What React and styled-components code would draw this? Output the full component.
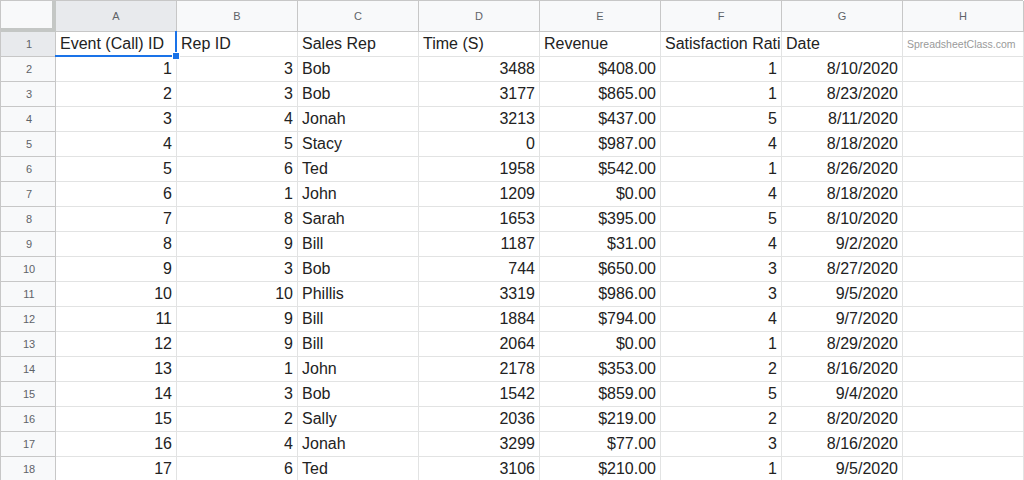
import React from "react";
import styled, { createGlobalStyle } from "styled-components";

const Global = createGlobalStyle`
  html, body { margin: 0; padding: 0; background: #fff; }
  body { font-family: "Liberation Sans", Arial, sans-serif; overflow: hidden; }
`;

const Sheet = styled.div`
  display: grid;
  grid-template-columns: 55px repeat(8, 121px);
  grid-auto-rows: 25px;
  grid-template-rows: 31px;
  width: 1023px;
  border-left: 1px solid #c7c7c7;
  border-top: 1px solid #c7c7c7;
  box-sizing: border-box;
`;

const Corner = styled.div`
  background: #f8f9fa;
  border-right: 4px solid #c4c7c5;
  border-bottom: 4px solid #c4c7c5;
  box-sizing: border-box;
`;

const ColHead = styled.div`
  background: ${(p) => (p.$active ? "#e8eaed" : "#f8f9fa")};
  border-right: 1px solid #c7c7c7;
  border-bottom: 1px solid #c7c7c7;
  box-sizing: border-box;
  display: flex;
  align-items: center;
  justify-content: center;
  font-size: 11px;
  color: #5f6368;
`;

const RowHead = styled.div`
  background: ${(p) => (p.$active ? "#e8eaed" : "#f8f9fa")};
  border-right: 1px solid #c7c7c7;
  border-bottom: 1px solid #c7c7c7;
  box-sizing: border-box;
  display: flex;
  align-items: center;
  justify-content: center;
  font-size: 11px;
  color: #5f6368;
  padding-left: 2px;
`;

const Cell = styled.div`
  position: relative;
  z-index: ${(p) => (p.$selected ? 2 : "auto")};
  border-right: 1px solid #e2e3e3;
  border-bottom: 1px solid #e2e3e3;
  box-sizing: border-box;
  display: flex;
  align-items: center;
  justify-content: ${(p) => (p.$num ? "flex-end" : "flex-start")};
  padding: 0 4px 0 4px;
  font-size: ${(p) => (p.$note ? "10.5px" : "16px")};
  color: ${(p) => (p.$note ? "#9a9a9a" : "#222")};
  white-space: nowrap;
  overflow: ${(p) => (p.$selected ? "visible" : "hidden")};
`;

const Selection = styled.div`
  position: absolute;
  left: -1px;
  top: -1px;
  right: -1px;
  bottom: -1px;
  border-right: 2px solid #1a73e8;
  border-bottom: 2px solid #1a73e8;
  pointer-events: none;
`;

const Handle = styled.div`
  position: absolute;
  right: -5px;
  bottom: -5px;
  width: 6px;
  height: 6px;
  background: #1a73e8;
  border: 1px solid #fff;
`;

const cols = ["A", "B", "C", "D", "E", "F", "G", "H"];

const header = ["Event (Call) ID", "Rep ID", "Sales Rep", "Time (S)", "Revenue", "Satisfaction Rating", "Date"];

const data = [
  [1, 3, "Bob", 3488, "$408.00", 1, "8/10/2020"],
  [2, 3, "Bob", 3177, "$865.00", 1, "8/23/2020"],
  [3, 4, "Jonah", 3213, "$437.00", 5, "8/11/2020"],
  [4, 5, "Stacy", 0, "$987.00", 4, "8/18/2020"],
  [5, 6, "Ted", 1958, "$542.00", 1, "8/26/2020"],
  [6, 1, "John", 1209, "$0.00", 4, "8/18/2020"],
  [7, 8, "Sarah", 1653, "$395.00", 5, "8/10/2020"],
  [8, 9, "Bill", 1187, "$31.00", 4, "9/2/2020"],
  [9, 3, "Bob", 744, "$650.00", 3, "8/27/2020"],
  [10, 10, "Phillis", 3319, "$986.00", 3, "9/5/2020"],
  [11, 9, "Bill", 1884, "$794.00", 4, "9/7/2020"],
  [12, 9, "Bill", 2064, "$0.00", 1, "8/29/2020"],
  [13, 1, "John", 2178, "$353.00", 2, "8/16/2020"],
  [14, 3, "Bob", 1542, "$859.00", 5, "9/4/2020"],
  [15, 2, "Sally", 2036, "$219.00", 2, "8/20/2020"],
  [16, 4, "Jonah", 3299, "$77.00", 3, "8/16/2020"],
  [17, 6, "Ted", 3106, "$210.00", 1, "9/5/2020"],
];

const numericCols = [true, true, false, true, true, true, true];

export default function App() {
  return (
    <>
      <Global />
      <Sheet>
        <Corner />
        {cols.map((c) => (
          <ColHead key={c} $active={c === "A"}>{c}</ColHead>
        ))}

        <RowHead $active>1</RowHead>
        {header.map((h, i) => (
          <Cell key={h} $selected={i === 0}>
            {h}
            {i === 0 && (
              <Selection>
                <Handle />
              </Selection>
            )}
          </Cell>
        ))}
        <Cell $note>SpreadsheetClass.com</Cell>

        {data.map((row, r) => (
          <React.Fragment key={r}>
            <RowHead>{r + 2}</RowHead>
            {row.map((v, i) => (
              <Cell key={i} $num={numericCols[i]}>{v}</Cell>
            ))}
            <Cell />
          </React.Fragment>
        ))}
      </Sheet>
    </>
  );
}
